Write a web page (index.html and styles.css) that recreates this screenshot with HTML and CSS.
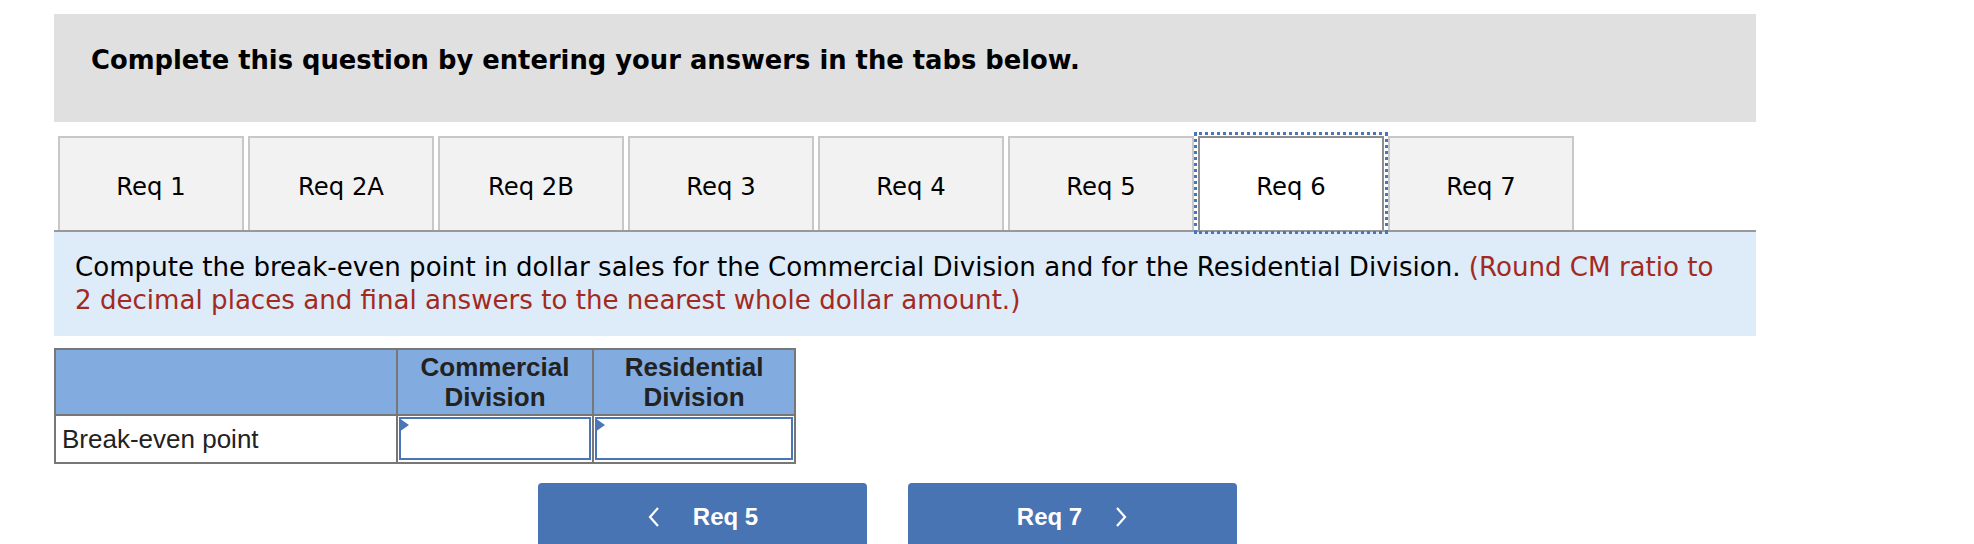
FILE: index.html
```html
<!DOCTYPE html>
<html>
<head>
<meta charset="utf-8">
<link rel="stylesheet" href="styles.css">
</head>
<body>
<div class="page">
  <div class="banner">
    <h2 class="banner-title">Complete this question by entering your answers in the tabs below.</h2>
  </div>
  <div class="tabs">
    <div class="tab">Req 1</div>
    <div class="tab">Req 2A</div>
    <div class="tab">Req 2B</div>
    <div class="tab">Req 3</div>
    <div class="tab">Req 4</div>
    <div class="tab">Req 5</div>
    <div class="tab active">Req 6</div>
    <div class="tab">Req 7</div>
  </div>
  <div class="prompt">
    <p class="prompt-text">Compute the break-even point in dollar sales for the Commercial Division and for the Residential Division. <span class="note">(Round CM ratio to 2 decimal places and final answers to the nearest whole dollar amount.)</span></p>
  </div>
  <table class="grid">
    <colgroup>
      <col class="c-label">
      <col class="c-val">
      <col class="c-val2">
    </colgroup>
    <tr class="head">
      <th></th>
      <th>Commercial<br>Division</th>
      <th>Residential<br>Division</th>
    </tr>
    <tr class="body">
      <td class="label">Break-even point</td>
      <td class="entry"><div class="field"><span class="marker"></span></div></td>
      <td class="entry"><div class="field"><span class="marker"></span></div></td>
    </tr>
  </table>
  <div class="nav">
    <button class="nav-btn">
      <svg class="chev" width="14" height="22" viewBox="0 0 14 22"><polyline points="11,2 3,11 11,20" fill="none" stroke="#fff" stroke-width="2.2"/></svg>
      <span>Req 5</span>
    </button>
    <button class="nav-btn">
      <span>Req 7</span>
      <svg class="chev" width="14" height="22" viewBox="0 0 14 22"><polyline points="3,2 11,11 3,20" fill="none" stroke="#fff" stroke-width="2.2"/></svg>
    </button>
  </div>
</div>
</body>
</html>
```

FILE: styles.css
```css
html, body {
  margin: 0;
  padding: 0;
  background: #ffffff;
}

.page {
  margin-left: 54px;
  width: 1702px;
  padding-top: 14px;
  font-family: "DejaVu Sans", Verdana, sans-serif;
}

.banner {
  background: #e0e0e0;
  height: 108px;
  box-sizing: border-box;
  padding: 30px 37px 0;
}

.banner-title {
  margin: 0;
  font-size: 25.8px;
  line-height: 32px;
  font-weight: bold;
  color: #000;
}

.tabs {
  display: flex;
  gap: 4px;
  margin-top: 14px;
  padding-left: 4px;
  border-bottom: 2px solid #999999;
}

.tab {
  width: 186px;
  height: 94px;
  box-sizing: border-box;
  border: 2px solid #c8c8c8;
  border-bottom: none;
  background: #f2f2f2;
  display: flex;
  align-items: center;
  justify-content: center;
  padding-top: 5px;
  font-size: 24.3px;
  color: #000;
}

.tab.active {
  background: #ffffff;
  border-color: #8e8e8e;
  outline: 3px dotted #4a76b8;
  outline-offset: 1px;
}

.prompt {
  background: #deebf8;
  height: 104px;
  box-sizing: border-box;
  padding: 19px 36px 0 21px;
}

.prompt-text {
  margin: 0;
  font-size: 26.1px;
  line-height: 33px;
  color: #000;
}

.note {
  color: #a32a1e;
}

.grid {
  margin-top: 12px;
  border-collapse: collapse;
  table-layout: fixed;
  width: 741px;
  font-family: "Liberation Sans", Arial, sans-serif;
  color: #222;
}

.c-label { width: 342px; }
.c-val { width: 196px; }
.c-val2 { width: 202px; }

.grid th, .grid td {
  border: 2px solid #777777;
  padding: 0;
}

.head th {
  background: #82abdf;
  height: 64px;
  font-size: 26px;
  line-height: 30px;
  font-weight: bold;
  text-align: center;
  vertical-align: middle;
}

.body td {
  height: 45px;
  background: #fff;
}

.label {
  font-size: 26px;
  padding-left: 6px !important;
  vertical-align: middle;
}

.entry {
  padding: 1px 1px 0 1px !important;
  vertical-align: top;
}

.field {
  position: relative;
  height: 43px;
  box-sizing: border-box;
  border: 2px solid #4a76b8;
  background: #fff;
}

.marker {
  position: absolute;
  left: -2px;
  top: -1px;
  width: 0;
  height: 0;
  border-left: 10px solid #4a76b8;
  border-top: 7px solid transparent;
  border-bottom: 7px solid transparent;
}

.nav {
  display: flex;
  gap: 41px;
  margin-top: 19px;
  padding-left: 484px;
}

.nav-btn {
  width: 329px;
  height: 68px;
  border: none;
  border-radius: 4px;
  background: #4874b3;
  color: #fff;
  display: flex;
  align-items: center;
  justify-content: center;
  gap: 32px;
  font-family: "Liberation Sans", Arial, sans-serif;
  font-weight: bold;
  font-size: 24px;
  padding: 0;
}

.chev {
  display: block;
}
```
